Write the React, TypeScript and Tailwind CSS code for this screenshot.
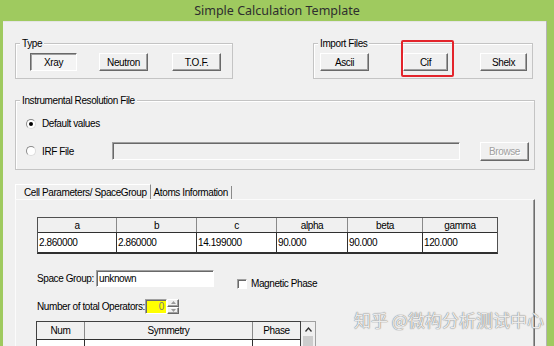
import React from 'react';

const ui = "font-['Liberation_Sans',Arial,sans-serif] text-[10px] tracking-[-0.4px] leading-[13px] text-black whitespace-nowrap";
const btn =
  'flex items-center justify-center h-[18px] bg-[#f0f0f0] border border-t-white border-l-white border-b-[#696969] border-r-[#696969] shadow-[inset_-1px_-1px_0_#a0a0a0]';
const btnDown =
  'flex items-center justify-center h-[18px] bg-[#f4f4f4] border border-t-[#696969] border-l-[#696969] border-b-white border-r-white shadow-[inset_1px_1px_0_#a0a0a0]';
const sunken =
  'border border-t-[#a0a0a0] border-l-[#a0a0a0] border-b-white border-r-white shadow-[inset_1px_1px_0_#696969]';

function Group({ label, className, children }: { label: string; className: string; children: React.ReactNode }) {
  return (
    <div className={`relative shrink-0 border border-[#c4c4c4] shadow-[inset_1px_1px_0_#ffffff] ${className}`}>
      <span className="absolute -top-[7px] left-[4px] px-[2px] bg-[#f0f0f0] leading-[13px]">{label}</span>
      {children}
    </div>);
}

function Radio({ checked }: { checked?: boolean }) {
  return (
    <div className="w-[10px] h-[10px] rounded-full bg-white border border-t-[#8a8a8a] border-l-[#8a8a8a] border-b-[#dcdcdc] border-r-[#dcdcdc] flex items-center justify-center shrink-0">
      {checked && <div className="w-[4px] h-[4px] rounded-full bg-black" />}
    </div>);
}

const cellHeaders = ['a', 'b', 'c', 'alpha', 'beta', 'gamma'];
const cellValues = ['2.860000', '2.860000', '14.199000', '90.000', '90.000', '120.000'];

export default function App() {
  return (
    <div className={`w-[554px] h-[346px] overflow-hidden bg-[#9fca5f] flex flex-col relative ${ui}`}>
      {/* Title bar */}
      <div className="h-[21px] shrink-0 flex items-center justify-center font-['Noto_Sans',sans-serif] text-[12.5px] tracking-normal text-[#2e2e2e]">
        Simple Calculation Template
      </div>

      <div className="flex flex-1 min-h-0">
        <div className="w-[3px] shrink-0" />
        <div className="w-[543px] shrink-0 bg-[#f0f0f0] border-t border-[#e4e4e4] flex flex-col">
          {/* Type / Import Files */}
          <div className="flex shrink-0 mt-[21px]">
            <Group label="Type" className="ml-[12px] w-[218px] h-[36px] flex items-start pt-[9px] pl-[14px]">
              <div className={`${btnDown} w-[47px]`}>Xray</div>
              <div className={`${btn} w-[49px] ml-[22px]`}>Neutron</div>
              <div className={`${btn} w-[49px] ml-[24px]`}>T.O.F.</div>
            </Group>
            <Group label="Import Files" className="ml-[80px] w-[220px] h-[36px] flex items-start pt-[9px] pl-[6px]">
              <div className={`${btn} w-[49px]`}>Ascii</div>
              <div className={`${btn} w-[45px] ml-[34px]`}>Cif</div>
              <div className={`${btn} w-[47px] ml-[32px]`}>Shelx</div>
              <div className="absolute left-[87px] -top-[4px] w-[53px] h-[37px] border-2 border-[#e3242b] rounded-[2px]" />
            </Group>
          </div>

          {/* Instrumental Resolution File */}
          <Group label="Instrumental Resolution File" className="mt-[21px] ml-[12px] w-[520px] h-[70px] pt-[16px] pl-[10px] flex flex-col">
            <div className="flex items-center h-[13px]">
              <Radio checked />
              <span className="ml-[6px]">Default values</span>
            </div>
            <div className="flex items-center h-[18px] mt-[12px]">
              <Radio />
              <span className="ml-[6px] w-[70px]">IRF File</span>
              <div className={`${sunken} w-[348px] h-[18px] bg-[#f0f0f0]`} />
              <div className={`${btn} w-[49px] h-[19px] ml-[20px] text-[#a0a0a0] [text-shadow:1px_1px_0_#ffffff]`}>Browse</div>
            </div>
          </Group>

          {/* Tabs */}
          <div className="flex shrink-0 items-end ml-[12px] mt-[14px] h-[15px]">
            <div className="h-[15px] pl-[8px] pr-[3px] border-l border-t border-white border-r border-r-[#8a8a8a] flex items-center">
              Cell Parameters/ SpaceGroup
            </div>
            <div className="h-[13px] pl-[3px] pr-[3px] border-r border-r-[#8a8a8a] flex items-center">
              Atoms Information
            </div>
          </div>
          <div className="ml-[12px] w-[520px] flex-1 min-h-0 border-t border-l border-[#fbfbfb] border-r border-r-[#6e6e6e] shadow-[inset_-1px_0_0_#a0a0a0] pl-[21px] pt-[17px] flex flex-col">
            {/* Cell parameters grid */}
            <div className="w-[461px] shrink-0 border border-[#505050] border-b-2 border-b-[#303030]">
              <div className="grid grid-cols-[79px_80px_80px_71px_75px_74px] h-[15px] bg-[#f0f0f0] border-b border-[#303030]">
                {cellHeaders.map((h, i) =>
                <div key={h} className={`flex items-center justify-center ${i < 5 ? 'border-r border-[#8a8a8a]' : ''}`}>
                    {h}
                  </div>
                )}
              </div>
              <div className="grid grid-cols-[79px_80px_80px_71px_75px_74px] h-[19px] bg-white">
                {cellValues.map((v, i) =>
                <div key={i} className={`flex items-center pl-[1px] ${i < 5 ? 'border-r border-[#303030]' : ''}`}>
                    {v}
                  </div>
                )}
              </div>
            </div>

            {/* Space group */}
            <div className="flex shrink-0 items-start mt-[16px]">
              <div className="w-[59px] h-[17px] flex items-center">Space Group:</div>
              <div className={`${sunken} w-[118px] h-[17px] bg-white pl-[2px] pt-[1px]`}>unknown</div>
              <div className="flex items-center h-[13px] mt-[7px] ml-[23px]">
                <div className={`${sunken} w-[10px] h-[10px] bg-white`} />
                <span className="ml-[4px]">Magnetic Phase</span>
              </div>
            </div>

            {/* Operators */}
            <div className="flex shrink-0 items-start mt-[9px]">
              <div className="w-[108px] h-[15px] flex items-center">Number of total Operators:</div>
              <div className={`${sunken} w-[22px] h-[15px] bg-[#ffff00] flex items-center justify-end pr-[2px] text-[#7a7a7a]`}>0</div>
              <div className="w-[12px] h-[15px] flex flex-col">
                <div className={`${btn} w-[12px] h-[8px] border-t-[#e8e8e8] border-l-[#e8e8e8]`}>
                  <svg width="5" height="3" viewBox="0 0 5 3"><path d="M0 3 L2.5 0 L5 3 Z" fill="#9a9a9a" /></svg>
                </div>
                <div className={`${btn} w-[12px] h-[7px] border-t-[#e8e8e8] border-l-[#e8e8e8]`}>
                  <svg width="5" height="3" viewBox="0 0 5 3"><path d="M0 0 L2.5 3 L5 0 Z" fill="#9a9a9a" /></svg>
                </div>
              </div>
            </div>

            {/* Symmetry operators grid */}
            <div className="flex shrink-0 mt-[7px] -ml-[1px]">
              <div className="w-[265px] border border-[#404040]">
                <div className="grid grid-cols-[48px_168px_47px] h-[18px] bg-[#f0f0f0] border-b border-[#303030]">
                  <div className="flex items-center justify-center border-r border-[#8a8a8a]">Num</div>
                  <div className="flex items-center justify-center border-r border-[#8a8a8a]">Symmetry</div>
                  <div className="flex items-center justify-center">Phase</div>
                </div>
                <div className="grid grid-cols-[48px_168px_47px] h-[30px] bg-white">
                  <div className="border-r border-[#303030]" />
                  <div className="border-r border-[#303030]" />
                  <div />
                </div>
              </div>
              <div className="w-[15px] flex flex-col border-t border-r border-[#a0a0a0]">
                <div className="h-[14px] flex items-center justify-center">
                  <svg width="7" height="5" viewBox="0 0 7 5"><path d="M0.5 4.5 L3.5 1 L6.5 4.5" stroke="#333" strokeWidth="1.3" fill="none" /></svg>
                </div>
                <div className="mx-[2px] h-[12px] bg-[#cdcdcd]" />
              </div>
            </div>
          </div>
        </div>
        <div className="w-px shrink-0 bg-[#b4b4b4]" />
        <div className="flex-1" />
      </div>

      {/* Watermark */}
      <div className="absolute left-[354px] top-[310px] font-['Noto_Sans_CJK_SC',sans-serif] text-[17px] leading-[20px] tracking-normal text-white/85 [text-shadow:0_0_1px_#7a7a7a,0_0_1px_#7a7a7a] whitespace-nowrap">
        知乎 @微构分析测试中心
      </div>
    </div>);
}
